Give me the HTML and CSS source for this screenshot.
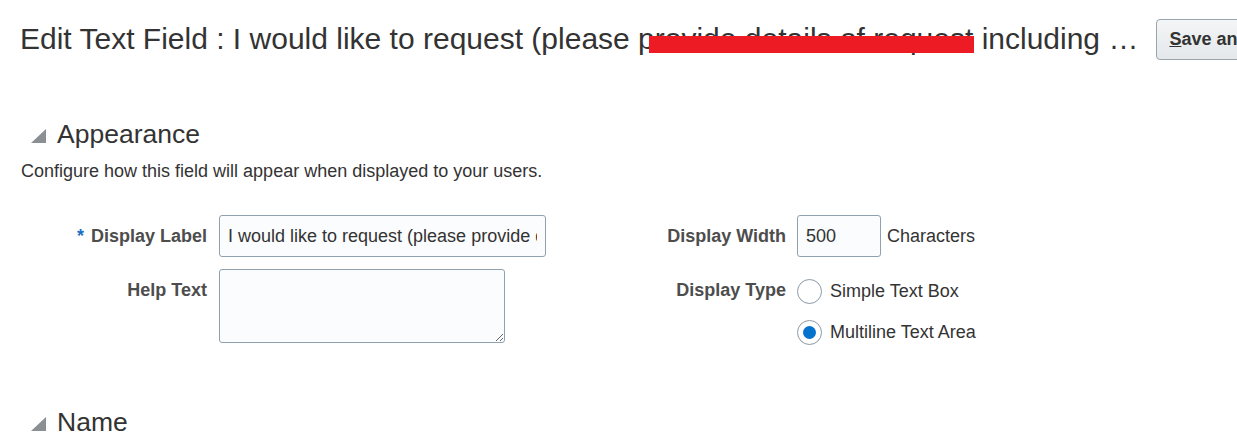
FILE: index.html
```html
<!DOCTYPE html>
<html>
<head>
<meta charset="utf-8">
<link rel="stylesheet" href="styles.css">
</head>
<body>
<div class="page">
  <header class="header">
    <h1 class="title">Edit Text Field : I would like to request (please <span class="redacted">provide details of request</span> including …</h1>
    <button class="btn"><span class="u">S</span>ave and Close</button>
  </header>

  <section class="section">
    <div class="sec-head">
      <span class="tri"></span>
      <h2 class="sec-title">Appearance</h2>
    </div>
    <p class="desc">Configure how this field will appear when displayed to your users.</p>

    <div class="form">
      <div class="col col-left">
        <div class="row">
          <label class="lbl"><span class="req">*</span> Display Label</label>
          <div class="field"><input class="inp inp-label" type="text" value="I would like to request (please provide details of request including"></div>
        </div>
        <div class="row row-top">
          <label class="lbl lbl-top">Help Text</label>
          <div class="field"><textarea class="ta"></textarea></div>
        </div>
      </div>
      <div class="col col-right">
        <div class="row">
          <label class="lbl lbl-r">Display Width</label>
          <div class="field"><input class="inp inp-width" type="text" value="500"><span class="unit">Characters</span></div>
        </div>
        <div class="row row-top">
          <label class="lbl lbl-r lbl-top">Display Type</label>
          <div class="radios">
            <label class="radio"><span class="rb"></span>Simple Text Box</label>
            <label class="radio"><span class="rb on"></span>Multiline Text Area</label>
          </div>
        </div>
      </div>
    </div>
  </section>

  <section class="section section-name">
    <div class="sec-head">
      <span class="tri"></span>
      <h2 class="sec-title">Name</h2>
    </div>
  </section>
</div>
</body>
</html>
```

FILE: styles.css
```css
html, body {
  margin: 0;
  padding: 0;
  background: #ffffff;
  overflow: hidden;
}
body {
  font-family: "Liberation Sans", Arial, sans-serif;
  color: #333333;
  width: 1237px;
  height: 435px;
}
.page {
  padding: 0 0 0 20px;
}
.header {
  display: flex;
  align-items: center;
  height: 78px;
  white-space: nowrap;
}
.title {
  margin: 0;
  font-weight: normal;
  font-size: 30px;
  color: #333333;
}
.redacted {
  position: relative;
}
.redacted::after {
  content: "";
  position: absolute;
  left: 11px;
  right: -1px;
  top: 14px;
  height: 17px;
  background: #ed1c24;
}
.btn {
  margin-left: 18px;
  flex: none;
  height: 41px;
  padding: 0 12px;
  border: 1px solid #9aa4ac;
  border-radius: 4px;
  background: linear-gradient(#f3f5f6, #e5e8eb);
  font-family: "Liberation Sans", Arial, sans-serif;
  font-weight: bold;
  font-size: 18px;
  color: #333;
}
.u { text-decoration: underline; }

.sec-head {
  display: flex;
  align-items: center;
  margin-left: 11px;
  height: 36px;
  margin-top: 38px;
}
.tri {
  width: 0;
  height: 0;
  border-left: 15px solid transparent;
  border-bottom: 14px solid #8a8f94;
  margin-right: 11px;
  margin-top: 3px;
}
.sec-title {
  margin: 0;
  font-weight: normal;
  font-size: 26.5px;
  color: #333;
}
.desc {
  margin: 9px 0 0 1px;
  font-size: 18px;
  color: #333;
}
.form {
  display: flex;
  margin-top: 33px;
}
.col {
  display: flex;
  flex-direction: column;
  gap: 12px;
}
.col-left { width: 620px; }
.row {
  display: flex;
  align-items: center;
}
.row-top { align-items: flex-start; }
.lbl {
  width: 187px;
  text-align: right;
  font-weight: bold;
  font-size: 18px;
  color: #4d4d4d;
  margin-right: 12px;
  flex: none;
}
.lbl-r { width: 146px; margin-right: 11px; }
.lbl-top { margin-top: 11px; }
.req { color: #1a6fbf; margin-right: 2px; }
.field { display: flex; align-items: center; }
.inp {
  box-sizing: border-box;
  height: 42px;
  border: 1px solid #8fa1ae;
  border-radius: 3px;
  background: #fbfcfd;
  font-family: "Liberation Sans", Arial, sans-serif;
  font-size: 18px;
  color: #333;
  padding: 0 8px;
  outline: none;
}
.inp-label { width: 327px; }
.inp-width { width: 84px; }
.unit { margin-left: 6px; font-size: 18px; color: #333; }
.ta {
  box-sizing: border-box;
  width: 286px;
  height: 74px;
  border: 1px solid #8fa1ae;
  border-radius: 3px;
  background: #fbfcfd;
  resize: both;
  margin: 0;
  display: block;
}
.radios {
  display: flex;
  flex-direction: column;
  gap: 16px;
  padding-top: 10px;
}
.radio {
  display: flex;
  align-items: center;
  font-size: 18px;
  color: #333;
  height: 25px;
}
.rb {
  box-sizing: border-box;
  width: 25px;
  height: 25px;
  border: 1px solid #8a9aa7;
  border-radius: 50%;
  background: #fff;
  margin-right: 8px;
  position: relative;
}
.rb.on::after {
  content: "";
  position: absolute;
  left: 5px;
  top: 5px;
  width: 13px;
  height: 13px;
  border-radius: 50%;
  background: #0572ce;
}
.section-name .sec-head { margin-top: 59px; }
```
